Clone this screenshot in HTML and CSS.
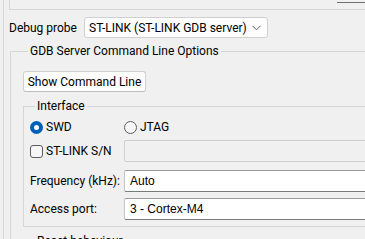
FILE: index.html
```html
<!DOCTYPE html>
<html>

<head>
    <meta name="viewport" content="width=device-width,initial-scale=1.0">
    <title>Debugger settings</title>
    <link rel="stylesheet" href="styles.css">
</head>

<body>
    <div class="page">
        <div class="top-box">
            <div class="top-tab"></div>
        </div>

        <div class="probe-row">
            <label class="probe-label">Debug probe</label>
            <div class="combo">
                <span>ST-LINK (ST-LINK GDB server)</span>
                <svg class="chevron" width="9" height="6" viewBox="0 0 9 6">
                    <polyline points="0.5,0.8 4.5,4.8 8.5,0.8" fill="none" stroke="#5c5c5c" stroke-width="1" />
                </svg>
            </div>
        </div>

        <fieldset class="group gdb-group">
            <legend>GDB Server Command Line Options</legend>
            <button class="cmd-button">Show Command Line</button>

            <fieldset class="group iface-group">
                <legend>Interface</legend>
                <div class="iface-grid">
                    <label class="choice">
                        <input type="radio" name="iface" checked>
                        <span>SWD</span>
                    </label>
                    <label class="choice">
                        <input type="radio" name="iface">
                        <span>JTAG</span>
                    </label>

                    <label class="choice row-sn">
                        <input type="checkbox">
                        <span>ST-LINK S/N</span>
                    </label>
                    <div class="field field-disabled row-sn"></div>

                    <label class="field-label row-freq">Frequency (kHz):</label>
                    <div class="field row-freq">Auto</div>

                    <label class="field-label row-port">Access port:</label>
                    <div class="field row-port">3 - Cortex-M4</div>
                </div>
            </fieldset>

            <fieldset class="group reset-group">
                <legend>Reset behaviour</legend>
                <div class="reset-body"></div>
            </fieldset>
        </fieldset>
    </div>
</body>

</html>
```

FILE: styles.css
```css
html,
body {
    margin: 0;
    padding: 0;
    width: 365px;
    height: 239px;
    overflow: hidden;
    background: #f0f0f0;
}

body {
    font-family: Roboto, "Segoe UI", sans-serif;
    font-size: 12px;
    color: #000;
}

.page {
    margin-left: 3px;
    padding-left: 5px;
    border-left: 1px solid #d6d6d6;
    width: 357px;
    height: 239px;
    overflow: hidden;
}

.top-box {
    height: 10px;
    box-sizing: border-box;
    border-left: 1px solid #d6d6d6;
    border-bottom: 1px solid #d6d6d6;
    display: flex;
}

.top-tab {
    margin-left: 327px;
    margin-top: 2px;
    width: 40px;
    height: 0;
    border-top: 1px solid #707070;
}

.probe-row {
    display: flex;
    align-items: center;
    margin-top: 7px;
    height: 21px;
}

.probe-label {
    width: 75px;
    line-height: 16px;
}

.combo {
    width: 184px;
    height: 21px;
    box-sizing: border-box;
    display: flex;
    align-items: center;
    justify-content: space-between;
    padding: 0 5px 0 4px;
    background: #fdfdfd;
    border: 1px solid #d0d0d0;
    border-radius: 3px;
    line-height: 16px;
    white-space: nowrap;
}

.chevron {
    margin-right: 1px;
}

.group {
    margin: 0;
    padding: 0;
    border: 1px solid #d6d6d6;
    border-radius: 0;
    min-width: 0;
}

.group>legend {
    margin-left: 5px;
    padding: 0 2px;
    line-height: 16px;
    white-space: nowrap;
}

.gdb-group {
    margin-left: 1px;
    margin-top: 5px;
    padding-left: 12px;
    width: 500px;
    border-right: none;
    border-bottom: none;
}

.cmd-button {
    display: block;
    margin-top: 12px;
    width: 123px;
    height: 21px;
    padding: 0;
    font-family: inherit;
    font-size: 12px;
    color: #000;
    background: #fdfdfd;
    border: 1px solid #d0d0d0;
    border-bottom-color: #bcbcbc;
    border-radius: 3px;
}

.iface-group {
    margin-top: 6px;
    padding: 5px 0 6px 6px;
    border-right: none;
}

.iface-grid {
    display: grid;
    grid-template-columns: 94px 360px;
    align-items: center;
}

.choice {
    display: flex;
    align-items: center;
    gap: 3px;
    line-height: 16px;
}

.choice input {
    appearance: none;
    margin: 0;
    width: 13px;
    height: 13px;
    box-sizing: border-box;
    border: 1px solid #5d5d5d;
    background: #f6f6f6;
}

.choice input[type="radio"] {
    border-radius: 50%;
}

.choice input[type="radio"]:checked {
    border: 4px solid #005fb8;
    background: #fff;
}

.choice input[type="checkbox"] {
    border-radius: 3px;
}

.field {
    height: 22px;
    box-sizing: border-box;
    padding-left: 5px;
    display: flex;
    align-items: center;
    font-family: "Liberation Sans", Arial, sans-serif;
    font-size: 12px;
    background: #fff;
    border: 1px solid #9a9a9a;
    border-left-color: #c4c4c4;
    border-bottom-color: #7a7a7a;
    border-radius: 2px;
}

.field-disabled {
    background: #f0f0f0;
    border: 1px solid #cfcfcf;
}

.field-label {
    line-height: 16px;
}

.row-sn {
    margin-top: 5px;
}

.row-freq {
    margin-top: 8px;
}

.row-port {
    margin-top: 6px;
}

.reset-group {
    margin-top: 6px;
    padding-left: 6px;
    border-right: none;
}

.reset-body {
    height: 40px;
}
```
